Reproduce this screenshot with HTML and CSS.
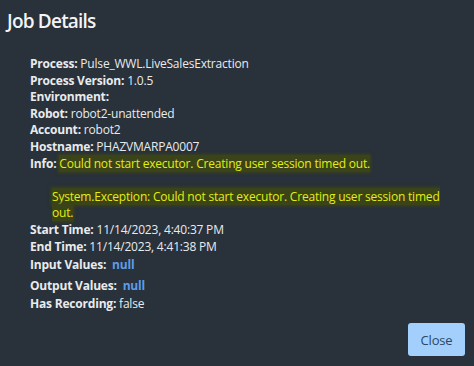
FILE: index.html
```html
<!DOCTYPE html>
<html>
<head>
<meta charset="utf-8">
<link rel="stylesheet" href="styles.css">
</head>
<body>
<div class="dialog">
  <h1 class="title">Job Details</h1>
  <div class="details">
    <div class="row"><b>Process:</b> Pulse_WWL.LiveSalesExtraction</div>
    <div class="row"><b>Process Version:</b> 1.0.5</div>
    <div class="row"><b>Environment:</b></div>
    <div class="row"><b>Robot:</b> robot2-unattended</div>
    <div class="row"><b>Account:</b> robot2</div>
    <div class="row"><b>Hostname:</b> PHAZVMARPA0007</div>
    <div class="row"><b>Info:</b> <span class="hl">Could not start executor. Creating user session timed out.</span></div>
    <div class="exc"><span class="hl">System.Exception: Could not start executor. Creating user session timed out.</span></div>
    <div class="row"><b>Start Time:</b> 11/14/2023, 4:40:37 PM</div>
    <div class="row"><b>End Time:</b> 11/14/2023, 4:41:38 PM</div>
    <div class="row tall"><b>Input Values:</b> <span class="null">null</span></div>
    <div class="row tall"><b>Output Values:</b> <span class="null">null</span></div>
    <div class="row"><b>Has Recording:</b> false</div>
  </div>
  <div class="footer">
    <button class="close">Close</button>
  </div>
</div>
</body>
</html>
```
FILE: styles.css
```css
html, body {
  margin: 0;
  padding: 0;
  background: #29313a;
}
body {
  font-family: "Open Sans", "Noto Sans", sans-serif;
  color: #e8ebee;
  width: 474px;
  height: 366px;
  overflow: hidden;
}
.dialog {
  display: flex;
  flex-direction: column;
  height: 366px;
  box-sizing: border-box;
}
.title {
  margin: 0;
  padding: 8px 0 0 7px;
  font-size: 19px;
  font-weight: 600;
  line-height: 26px;
  letter-spacing: -0.8px;
  color: #f2f4f6;
}
.details {
  padding: 22px 0 0 30px;
  font-size: 12px;
  letter-spacing: -0.2px;
  line-height: 16.6px;
}
.row b {
  font-weight: 700;
}
.hl {
  color: #e4ee12;
  background: #3b4318;
  box-shadow: 0 0 3px 1px #3b4318;
}
.exc {
  margin: 16.6px 24px 0 22px;
}
.tall {
  padding: 2px 0 2px;
}
.null {
  color: #5b9ee8;
  font-weight: 700;
  margin-left: 3px;
}
.footer {
  margin-top: auto;
  display: flex;
  justify-content: flex-end;
  padding: 0 9px 10px 0;
}
.close {
  font-family: "Open Sans", "Noto Sans", sans-serif;
  font-size: 13px;
  letter-spacing: -0.2px;
  background: #a3cffd;
  color: #2b4766;
  border: none;
  border-radius: 3px;
  width: 57px;
  height: 33px;
  padding: 0;
}
```
